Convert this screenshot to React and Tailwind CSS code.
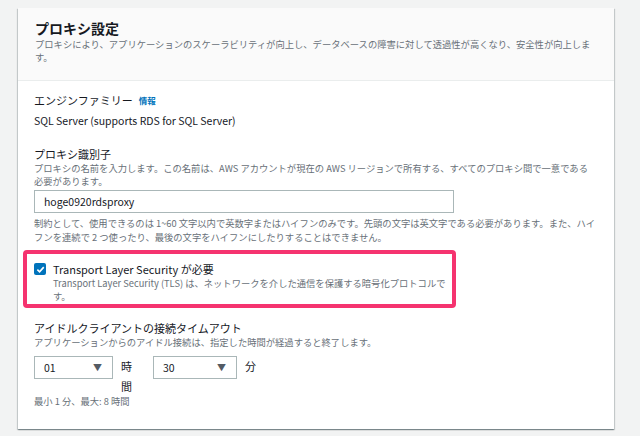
import { useState } from 'react';

const FONT = { fontFamily: '"Noto Sans CJK JP", "Noto Sans", sans-serif' };

function Select({ value, width }) {
  return (
    <div className={`flex h-[23px] ${width} items-center justify-between border border-[#aab7b8] bg-white pl-[9px] pr-[10px] text-[10.5px] text-[#16191f]`}>
      <span>{value}</span>
      <span className="text-[9px] text-[#545b64]">▼</span>
    </div>
  );
}

export default function App() {
  const [tls, setTls] = useState(true);
  const [name, setName] = useState('hoge0920rdsproxy');

  return (
    <div className="min-h-[436px] bg-[#f2f3f3] px-[18px] pt-[8px]" style={FONT}>
      <div className="w-[596px] bg-white shadow-[0_1px_1px_0_rgba(0,28,36,0.3),1px_1px_1px_0_rgba(0,28,36,0.15),-1px_1px_1px_0_rgba(0,28,36,0.15)]">
        {/* header */}
        <div className="border-b border-[#eaeded] bg-[#fafafa] pb-[16px] pl-[17px] pr-[16px] pt-[10px]">
          <h2 className="text-[14px] font-bold leading-[20px] text-[#16191f]">プロキシ設定</h2>
          <p className="text-[9.3px] leading-[13px] text-[#687078]">
            プロキシにより、アプリケーションのスケーラビリティが向上し、データベースの障害に対して透過性が高くなり、安全性が向上します。
          </p>
        </div>

        {/* body */}
        <div className="px-[16px] pb-[21px] pt-[11px] text-[#16191f]">
          <div className="flex items-center gap-[6px]">
            <span className="text-[11px] leading-[16px]">エンジンファミリー</span>
            <span className="text-[8.5px] font-bold text-[#0073bb]">情報</span>
          </div>
          <div className="mt-[5px] text-[10.5px] leading-[16px]">SQL Server (supports RDS for SQL Server)</div>

          <div className="mt-[17px] text-[11px] leading-[16px]">プロキシ識別子</div>
          <p className="text-[9.3px] leading-[13px] text-[#687078]">
            プロキシの名前を入力します。この名前は、AWS アカウントが現在の AWS リージョンで所有する、すべてのプロキシ間で一意である
            <br />
            必要があります。
          </p>
          <input
            value={name}
            onChange={(e) => setName(e.target.value)}
            className="mt-[2px] block h-[23px] w-[420px] border border-[#aab7b8] px-[9px] text-[10.5px] text-[#16191f] outline-none"
          />
          <p className="mt-[3px] text-[9.3px] leading-[14px] text-[#687078]">
            制約として、使用できるのは 1~60 文字以内で英数字またはハイフンのみです。先頭の文字は英文字である必要があります。また、ハイフンを連続で 2 つ使ったり、最後の文字をハイフンにしたりすることはできません。
          </p>

          {/* highlighted checkbox */}
          <div className="-ml-[11px] mt-[6px] w-[433px] rounded-[4px] border-[4px] border-[#f5336f] pb-[1px] pl-[7px] pr-[6px] pt-[7px]">
            <label className="flex gap-[7px]">
              <span className="mt-[2px]">
                <input type="checkbox" checked={tls} onChange={() => setTls(!tls)} className="sr-only" />
                <span className={`flex h-[12px] w-[12px] items-center justify-center rounded-[2px] ${tls ? 'bg-[#0073bb]' : 'border border-[#aab7b8] bg-white'}`}>
                  {tls && (
                    <svg width="9" height="9" viewBox="0 0 10 10">
                      <path d="M1.5 5.2 L4 7.6 L8.6 2.4" fill="none" stroke="white" strokeWidth="1.8" />
                    </svg>
                  )}
                </span>
              </span>
              <span>
                <span className="block text-[11px] leading-[16px]">Transport Layer Security が必要</span>
                <span className="block text-[9.3px] leading-[13px] text-[#687078]">
                  Transport Layer Security (TLS) は、ネットワークを介した通信を保護する暗号化プロトコルです。
                </span>
              </span>
            </label>
          </div>

          <div className="mt-[12px] text-[11px] leading-[16px]">アイドルクライアントの接続タイムアウト</div>
          <p className="text-[9.3px] leading-[13px] text-[#687078]">
            アプリケーションからのアイドル接続は、指定した時間が経過すると終了します。
          </p>
          <div className="mt-[7px] flex items-start">
            <Select value="01" width="w-[79px]" />
            <div className="ml-[8px] w-[14px] text-[11px] leading-[20px]">時間</div>
            <div className="ml-[18px]">
              <Select value="30" width="w-[84px]" />
            </div>
            <div className="ml-[8px] text-[11px] leading-[20px]">分</div>
          </div>
          <p className="mt-[-1px] text-[9.3px] leading-[13px] text-[#687078]">最小 1 分、最大: 8 時間</p>
        </div>
      </div>
    </div>
  );
}
